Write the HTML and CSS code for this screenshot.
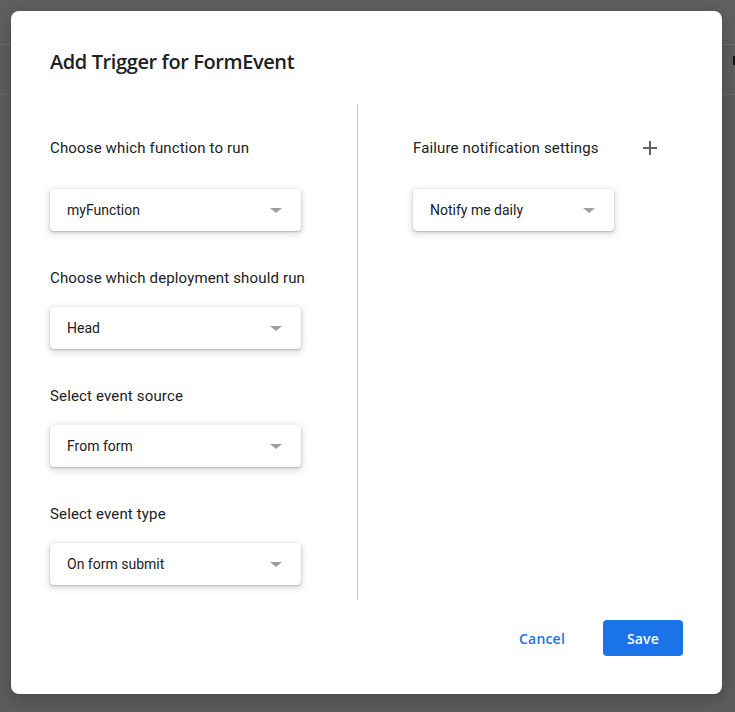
FILE: index.html
```html
<!DOCTYPE html>
<html>
<head>
<meta charset="utf-8">
<link rel="stylesheet" href="styles.css">
</head>
<body>
<div class="page">
  <div class="topbar"></div>
  <div class="toolbar"><span class="edge-mark"></span></div>
</div>
<div class="dialog">
  <h1 class="title">Add Trigger for FormEvent</h1>
  <div class="columns">
    <div class="col-left">
      <div class="field first">
        <div class="label">Choose which function to run</div>
        <div class="select wide"><span>myFunction</span><i class="caret"></i></div>
      </div>
      <div class="field">
        <div class="label">Choose which deployment should run</div>
        <div class="select wide"><span>Head</span><i class="caret"></i></div>
      </div>
      <div class="field">
        <div class="label">Select event source</div>
        <div class="select wide"><span>From form</span><i class="caret"></i></div>
      </div>
      <div class="field">
        <div class="label">Select event type</div>
        <div class="select wide"><span>On form submit</span><i class="caret"></i></div>
      </div>
    </div>
    <div class="divider"></div>
    <div class="col-right">
      <div class="field first">
        <div class="label-row">
          <div class="label">Failure notification settings</div>
          <svg class="plus" width="14" height="14" viewBox="0 0 14 14"><path d="M7 0v14M0 7h14" stroke="#5f6368" stroke-width="2" fill="none"/></svg>
        </div>
        <div class="select narrow"><span>Notify me daily</span><i class="caret"></i></div>
      </div>
    </div>
  </div>
  <div class="actions">
    <button class="btn-text">Cancel</button>
    <button class="btn-primary">Save</button>
  </div>
</div>
</body>
</html>
```
FILE: styles.css
```css
html, body {
  margin: 0;
  padding: 0;
}
body {
  width: 735px;
  height: 712px;
  background: #5c5c5c;
  overflow: hidden;
  font-family: Roboto, "Liberation Sans", sans-serif;
  color: #202124;
  position: relative;
}
.page {
  height: 712px;
}
.topbar {
  height: 44px;
  background: #606060;
  border-bottom: 1px solid #6c6c6c;
}
.toolbar {
  height: 49px;
  background: #5e5e5e;
  border-bottom: 1px solid #686868;
  position: relative;
}
.edge-mark {
  position: absolute;
  left: 733px;
  top: 11px;
  width: 3px;
  height: 9px;
  background: #111;
}
.dialog {
  position: absolute;
  left: 11px;
  top: 11px;
  width: 711px;
  height: 683px;
  box-sizing: border-box;
  background: #fff;
  border-radius: 8px;
  box-shadow: 0 4px 16px rgba(0,0,0,0.25);
  padding: 38px 39px 0 39px;
  display: flex;
  flex-direction: column;
}
.title {
  margin: 0;
  font-family: "Open Sans", Roboto, sans-serif;
  font-weight: 600;
  font-size: 20px;
  line-height: 26px;
  letter-spacing: -0.4px;
  color: #202124;
}
.columns {
  display: flex;
  margin-top: 29px;
  height: 497px;
}
.col-left {
  width: 307px;
  display: flex;
  flex-direction: column;
  gap: 37px;
  padding-top: 34px;
}
.divider {
  width: 1px;
  background: #c4c4c4;
  height: 496px;
}
.col-right {
  padding-left: 55px;
  padding-top: 34px;
  display: flex;
  flex-direction: column;
}
.field {
  display: flex;
  flex-direction: column;
  gap: 19px;
}
.field.first {
  gap: 31px;
}
.label {
  font-size: 15px;
  line-height: 20px;
  letter-spacing: 0.15px;
  color: #202124;
  white-space: nowrap;
}
.label-row {
  display: flex;
  align-items: center;
  justify-content: space-between;
  width: 244px;
}
.plus {
  display: block;
}
.select {
  height: 42px;
  box-sizing: border-box;
  border-radius: 4px;
  background: #fff;
  box-shadow: 0 1px 2px rgba(60,64,67,0.3), 0 2px 6px 2px rgba(60,64,67,0.15);
  display: flex;
  align-items: center;
  justify-content: space-between;
  padding: 0 19px 0 17px;
  font-size: 14px;
  color: #202124;
}
.select.wide { width: 251px; }
.select.narrow { width: 201px; }
.caret {
  width: 0;
  height: 0;
  border-left: 6px solid transparent;
  border-right: 6px solid transparent;
  border-top: 5px solid #9e9e9e;
}
.actions {
  display: flex;
  justify-content: flex-end;
  align-items: center;
  gap: 38px;
  margin-top: 19px;
}
.btn-text, .btn-primary {
  font-family: "Open Sans", Roboto, sans-serif;
  font-size: 14px;
  font-weight: 600;
  border: none;
  cursor: pointer;
  letter-spacing: 0.2px;
}
.btn-text {
  background: none;
  color: #1a73e8;
  padding: 0;
}
.btn-primary {
  width: 80px;
  height: 36px;
  border-radius: 4px;
  background: #1a73e8;
  color: #fff;
}
```
